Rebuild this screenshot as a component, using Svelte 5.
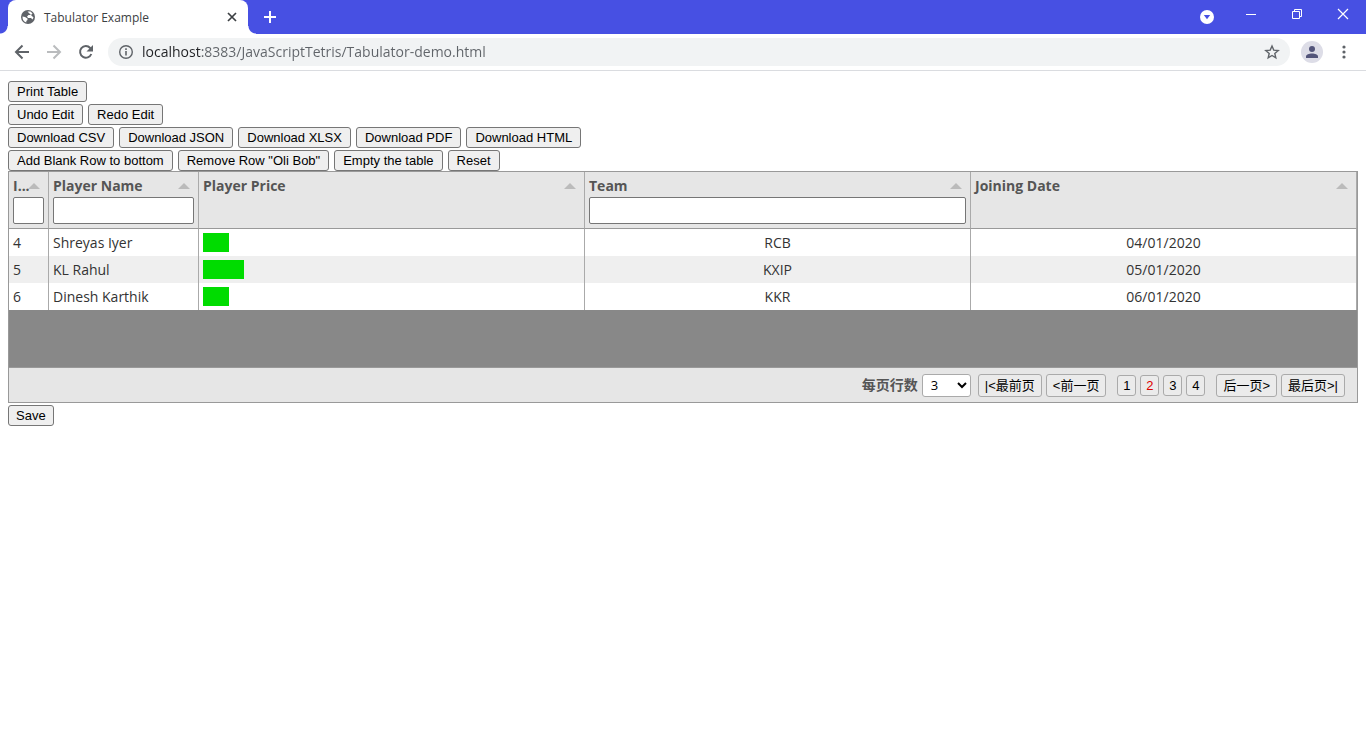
<script lang="ts">
	type Player = { id: number; name: string; price: number; team: string; joined: string };

	const toolbars = [
		["Print Table"],
		["Undo Edit", "Redo Edit"],
		["Download CSV", "Download JSON", "Download XLSX", "Download PDF", "Download HTML"],
		["Add Blank Row to bottom", 'Remove Row "Oli Bob"', "Empty the table", "Reset"]
	];

	const columns = [
		{ title: "I...", cls: "id", filter: true },
		{ title: "Player Name", cls: "name", filter: true },
		{ title: "Player Price", cls: "price", filter: false },
		{ title: "Team", cls: "team", filter: true },
		{ title: "Joining Date", cls: "date", filter: false }
	];

	const players: Player[] = [
		{ id: 4, name: "Shreyas Iyer", price: 7, team: "RCB", joined: "04/01/2020" },
		{ id: 5, name: "KL Rahul", price: 11, team: "KXIP", joined: "05/01/2020" },
		{ id: 6, name: "Dinesh Karthik", price: 7, team: "KKR", joined: "06/01/2020" }
	];

	const pages = [1, 2, 3, 4];
	let currentPage = $state(2);
	let pageSize = $state(3);
	let url = $state("localhost:8383/JavaScriptTetris/Tabulator-demo.html");
</script>

<header class="browser">
	<div class="tabstrip">
		<div class="tab">
			<svg class="globe" viewBox="0 0 16 16" width="16" height="16">
				<circle cx="8" cy="8" r="7" fill="#5f6368" />
				<path d="M2.500 7.500 5 8l2.500 1.500v1.500L6.300 12v1.500C4 13 2.300 10.500 2.500 7.500zM7.500 2.500h3L12.500 4.500 11 6H8.500L7 7.500 8 9h3l1.500 1.500 1-2" fill="#fff" />
			</svg>
			<span class="tab-title">Tabulator Example</span>
			<button class="icon" aria-label="Close tab">
				<svg viewBox="0 0 16 16" width="16" height="16"><path d="m4 4 8 8m0-8-8 8" stroke="#3c4043" stroke-width="1.700" /></svg>
			</button>
		</div>
		<button class="icon new-tab" aria-label="New tab">
			<svg viewBox="0 0 16 16" width="16" height="16"><path d="M8 2v12M2 8h12" stroke="#fff" stroke-width="2" /></svg>
		</button>
		<div class="window-controls">
			<button class="icon tab-search" aria-label="Search tabs">
				<svg viewBox="0 0 16 16" width="16" height="16"><circle cx="8" cy="8" r="7" fill="#fff" /><path d="M4.800 6h6.400L8 10.300z" fill="#4750e3" /></svg>
			</button>
			<button class="icon" aria-label="Minimize">
				<svg viewBox="0 0 12 12" width="12" height="12"><path d="M1 6.500h10" stroke="#fff" /></svg>
			</button>
			<button class="icon" aria-label="Restore">
				<svg viewBox="0 0 12 12" width="12" height="12"><path d="M1.500 3.500h7v7h-7zM3.500 3.500v-2h7v7h-2" fill="none" stroke="#fff" /></svg>
			</button>
			<button class="icon" aria-label="Close">
				<svg viewBox="0 0 12 12" width="12" height="12"><path d="m1 1 10 10M11 1 1 11" stroke="#fff" stroke-width="1.200" /></svg>
			</button>
		</div>
	</div>
	<div class="address-bar">
		<button class="icon" aria-label="Back">
			<svg viewBox="0 0 16 16" width="16" height="16"><path d="M15 8H2m6.500-6.500L2 8l6.500 6.500" fill="none" stroke="#5f6368" stroke-width="2" /></svg>
		</button>
		<button class="icon" aria-label="Forward">
			<svg viewBox="0 0 16 16" width="16" height="16"><path d="M1 8h13M7.500 1.500 14 8l-6.500 6.500" fill="none" stroke="#babcbe" stroke-width="2" /></svg>
		</button>
		<button class="icon" aria-label="Reload">
			<svg viewBox="0 0 16 16" width="16" height="16"><path d="M13.300 10A5.800 5.800 0 1 1 12.200 4l1 1" fill="none" stroke="#5f6368" stroke-width="2" /><path d="M15 1v6.500H8.500z" fill="#5f6368" /></svg>
		</button>
		<div class="omnibox">
			<svg viewBox="0 0 16 16" width="16" height="16"><circle cx="8" cy="8" r="6.300" fill="none" stroke="#5f6368" stroke-width="1.400" /><path d="M8 7v4.500M8 4.300v1.600" stroke="#5f6368" stroke-width="1.600" /></svg>
			<input type="text" aria-label="Address" spellcheck="false" bind:value={url} />
			<button class="icon" aria-label="Bookmark this page">
				<svg viewBox="0 0 16 16" width="16" height="16"><path d="m8 2 1.750 4.100 4.450.4-3.400 2.900 1 4.400L8 11.500l-3.800 2.300 1-4.400-3.400-2.900 4.450-.4z" fill="none" stroke="#5f6368" stroke-width="1.400" /></svg>
			</button>
		</div>
		<button class="icon avatar" aria-label="Profile">
			<svg viewBox="0 0 22 22" width="22" height="22"><circle cx="11" cy="11" r="11" fill="#dddde7" /><circle cx="11" cy="8" r="3" fill="#53557a" /><path d="M5 17v-1.500c0-2 3-3 6-3s6 1 6 3V17z" fill="#53557a" /></svg>
		</button>
		<button class="icon menu" aria-label="Menu">
			<svg viewBox="0 0 16 16" width="16" height="16" fill="#5f6368"><circle cx="8" cy="3" r="1.600" /><circle cx="8" cy="8" r="1.600" /><circle cx="8" cy="13" r="1.600" /></svg>
		</button>
	</div>
</header>

<main>
	{#each toolbars as labels}
		<div class="toolbar">
			{#each labels as label}
				<button>{label}</button>
			{/each}
		</div>
	{/each}

	<div class="tabulator">
		<table>
			<colgroup>
				{#each columns as column}
					<col class={column.cls} />
				{/each}
			</colgroup>
			<thead>
				<tr>
					{#each columns as column}
						<th>
							<div class="col-title">
								<span>{column.title}</span>
								<i class="arrow"></i>
							</div>
							{#if column.filter}
								<input type="search" aria-label="Filter {column.title}" />
							{/if}
						</th>
					{/each}
				</tr>
			</thead>
			<tbody>
				{#each players as player (player.id)}
					<tr>
						<td>{player.id}</td>
						<td>{player.name}</td>
						<td><div class="bar" style="width: {player.price}%"></div></td>
						<td class="center">{player.team}</td>
						<td class="center">{player.joined}</td>
					</tr>
				{/each}
			</tbody>
		</table>
		<div class="empty-space"></div>
		<div class="footer">
			<label for="page-size">每页行数</label>
			<select id="page-size" bind:value={pageSize}>
				<option value={3}>3</option>
				<option value={6}>6</option>
				<option value={8}>8</option>
			</select>
			<button>|&lt;最前页</button>
			<button>&lt;前一页</button>
			<span class="pages">
				{#each pages as page}
					<button class:active={page === currentPage} onclick={() => (currentPage = page)}>{page}</button>
				{/each}
			</span>
			<button>后一页&gt;</button>
			<button>最后页&gt;|</button>
		</div>
	</div>
	<button class="save">Save</button>
</main>

<style>
	:global(body) {
		margin: 0;
		background: #fff;
	}

	button,
	input,
	select {
		box-sizing: border-box;
		margin: 0;
	}

	.icon {
		display: flex;
		align-items: center;
		justify-content: center;
		padding: 0;
		border: 0;
		background: none;
	}

	.browser {
		font-family: "Open Sans", "Noto Sans", sans-serif;
		border-bottom: 1px solid #dadce0;
	}

	.tabstrip {
		display: flex;
		align-items: center;
		height: 34px;
		background: #4750e3;
	}

	/* flared feet on both sides of the tab */
	.tabstrip::before {
		content: "";
		align-self: flex-end;
		width: 8px;
		height: 8px;
		background: radial-gradient(circle at 0 0, #4750e3 7px, #fff 8px);
	}

	.tab {
		display: flex;
		align-items: center;
		box-sizing: border-box;
		width: 240px;
		height: 34px;
		padding: 0 8px 0 12px;
		border-radius: 8px 8px 0 0;
		background: #fff;
	}

	.tab::after {
		content: "";
		align-self: flex-end;
		width: 8px;
		height: 8px;
		margin-right: -16px;
		margin-left: 8px;
		background: radial-gradient(circle at 100% 0, #4750e3 7px, #fff 8px);
	}

	.tab-title {
		flex: 1;
		margin-left: 8px;
		color: #3c4043;
		font-size: 12px;
	}

	.new-tab {
		margin-left: 14px;
	}

	.window-controls {
		display: flex;
		align-items: center;
		height: 28px;
		margin: 0 0 6px auto;
	}

	.window-controls > .icon {
		width: 46px;
		height: 28px;
	}

	.window-controls > .tab-search {
		height: 22px;
		width: 42px;
		margin-top: 6px;
	}

	.address-bar {
		display: flex;
		align-items: center;
		height: 36px;
		padding: 0 14px;
		gap: 16px;
	}

	.omnibox {
		display: flex;
		flex: 1;
		align-items: center;
		height: 28px;
		margin-left: -2px;
		padding: 0 10px;
		border-radius: 14px;
		background: #f1f3f4;
	}

	/* host in a darker tone than the rest of the address */
	.omnibox > input {
		flex: 1;
		padding: 0 0 2px 8px;
		border: 0;
		outline: 0;
		background: linear-gradient(to right, #202124 67px, #5f6368 67px);
		background-clip: text;
		color: transparent;
		font-family: inherit;
		font-size: 14px;
	}

	.avatar {
		margin-left: -5px;
	}

	.menu {
		margin-left: -3px;
	}

	main {
		padding: 10px 8px;
		font-family: "Open Sans", "Noto Sans", "Noto Sans CJK SC", sans-serif;
		font-size: 14px;
	}

	.toolbar {
		display: flex;
		gap: 5px;
		height: 23px;
	}

	.toolbar > button,
	.save {
		height: 21px;
		padding: 0 8px;
		border: 1px solid #767676;
		border-radius: 3px;
		background: #efefef;
		color: #000;
		font-family: "Liberation Sans", Arial, sans-serif;
		font-size: 13px;
	}

	.toolbar:nth-child(4) {
		height: 21px;
	}

	.tabulator {
		border: 1px solid #999;
		background: #888;
	}

	table {
		width: 100%;
		border-collapse: separate;
		border-spacing: 0;
		table-layout: fixed;
	}

	.id {
		width: 40px;
	}

	.name {
		width: 150px;
	}

	th {
		box-sizing: border-box;
		height: 57px;
		padding: 4px;
		border-right: 1px solid #aaa;
		border-bottom: 1px solid #999;
		background: #e6e6e6;
		color: #555;
		text-align: left;
		vertical-align: top;
	}

	.col-title {
		display: flex;
		align-items: center;
		height: 20px;
	}

	.col-title > span {
		flex: 1;
		line-height: 20px;
		white-space: nowrap;
	}

	.arrow {
		margin: 0 4px 0 -4px;
		border-right: 6px solid transparent;
		border-bottom: 6px solid #bbb;
		border-left: 6px solid transparent;
	}

	th > input {
		display: block;
		width: 100%;
		height: 27px;
		margin-top: 1px;
		padding: 4px;
		border: 1px solid #767676;
		border-radius: 2px;
		background: #fff;
	}

	td {
		box-sizing: border-box;
		height: 27px;
		padding: 0 4px;
		border-right: 1px solid #aaa;
		color: #333;
		line-height: 19px;
		white-space: nowrap;
	}

	tbody > tr {
		background: #fff;
	}

	tbody > tr:nth-child(even) {
		background: #efefef;
	}

	.center {
		text-align: center;
	}

	.bar {
		height: 19px;
		background: #00dc00;
	}

	.empty-space {
		height: 57px;
	}

	.footer {
		display: flex;
		align-items: center;
		justify-content: flex-end;
		gap: 4px;
		height: 34px;
		padding-right: 12px;
		border-top: 1px solid #999;
		background: #e6e6e6;
		color: #555;
	}

	.footer > label {
		padding-bottom: 2px;
		font-weight: bold;
	}

	.footer > select {
		width: 49px;
		height: 23px;
		margin-right: 3px;
		padding: 0 4px;
		border: 1px solid #aaa;
		border-radius: 3px;
		background: #fff;
		color: #000;
		font-family: inherit;
		font-size: 13px;
	}

	.footer button {
		height: 23px;
		padding: 0 6px 2px;
		border: 1px solid #aaa;
		border-radius: 3px;
		background: #ebebeb;
		color: #000;
		font-family: "Liberation Sans", "Noto Sans CJK SC", sans-serif;
		font-size: 13px;
	}

	.pages {
		display: flex;
		gap: 4px;
		margin: 0 7px;
	}

	.footer .pages > button {
		width: 19px;
		height: 21px;
		padding: 0;
	}

	.footer .pages > .active {
		color: #d00;
	}

	.save {
		display: block;
		margin-top: 2px;
		padding: 0 7px;
	}
</style>
